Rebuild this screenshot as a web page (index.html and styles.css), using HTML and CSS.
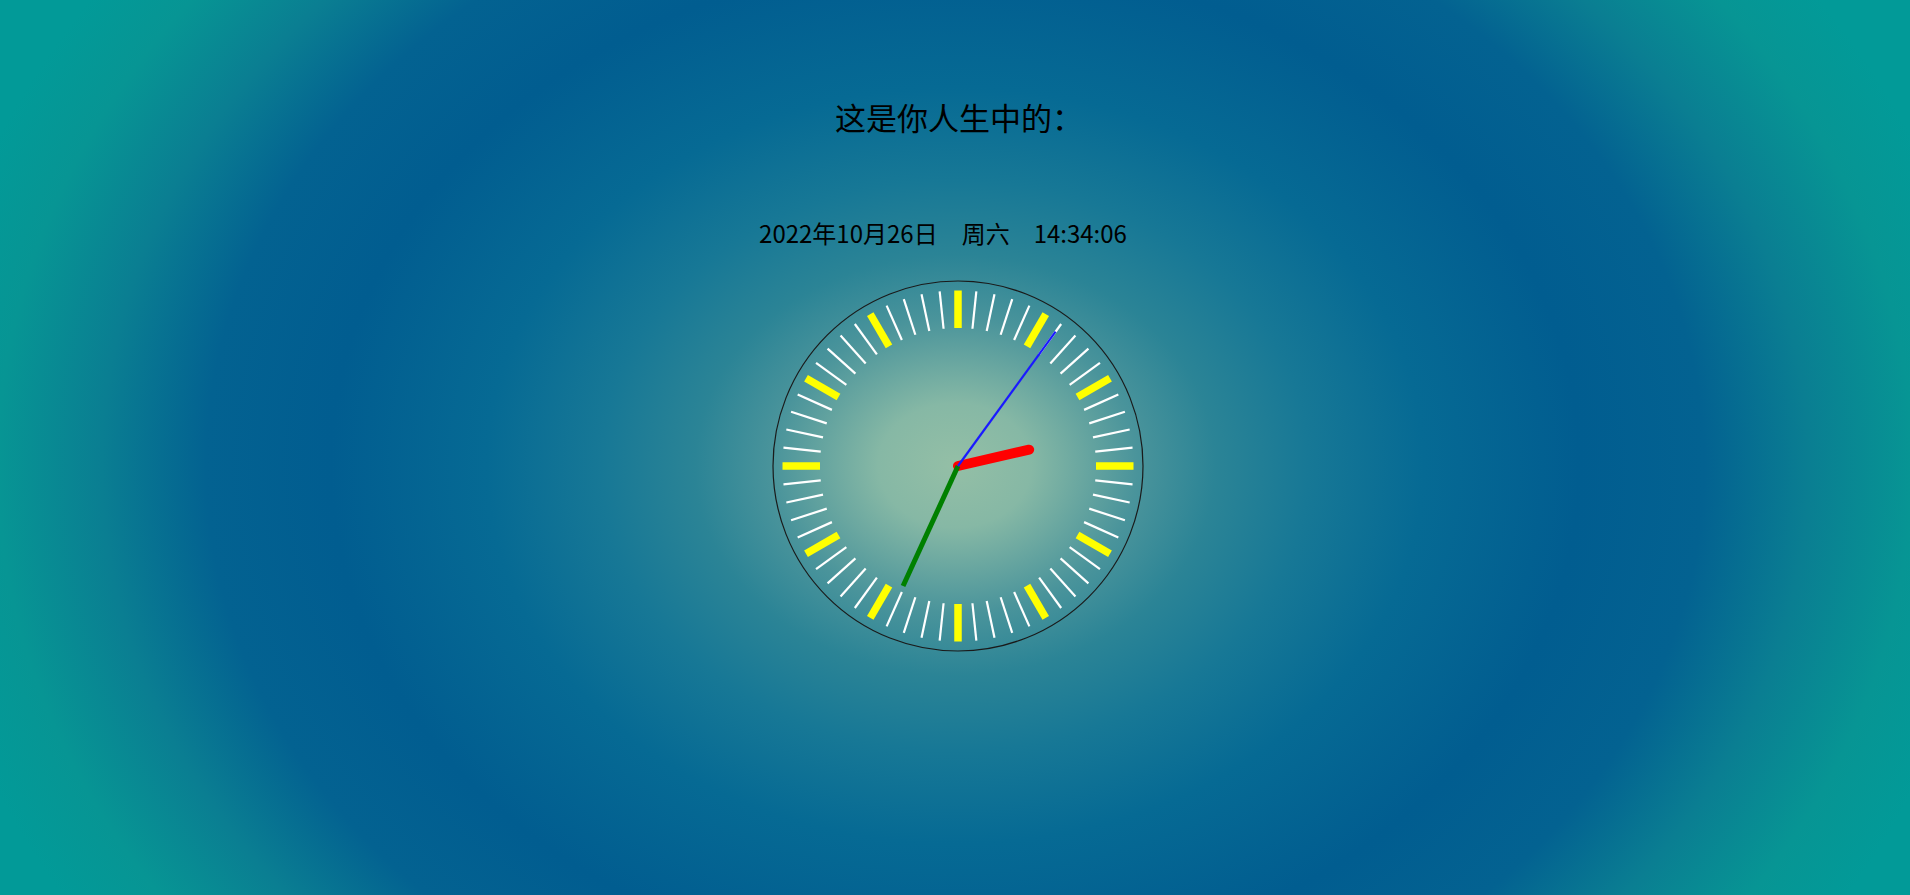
FILE: index.html
```html
<!DOCTYPE html>
<html lang="zh-CN">
<head>
<meta charset="utf-8">
<title>时钟</title>
<link rel="stylesheet" href="styles.css">
</head>
<body>
<main class="page">
  <h1 class="title">这是你人生中的：</h1>
  <p class="date">2022年10月26日　周六　14:34:06　</p>
  <div class="clock-wrap">
    <svg class="clock" width="400" height="400" viewBox="0 0 400 400">
      <defs>
        <line id="tick" x1="200" y1="24.5" x2="200" y2="62" stroke="#ffffff" stroke-width="2.2"/>
        <line id="hourtick" x1="200" y1="24.5" x2="200" y2="62" stroke="#ffff00" stroke-width="7.5"/>
      </defs>
      <circle cx="200" cy="200" r="185" fill="none" stroke="#1a1a1a" stroke-width="1.2"/>
      <g>
        <use href="#hourtick"/>
        <use href="#tick" transform="rotate(6 200 200)"/>
        <use href="#tick" transform="rotate(12 200 200)"/>
        <use href="#tick" transform="rotate(18 200 200)"/>
        <use href="#tick" transform="rotate(24 200 200)"/>
        <use href="#hourtick" transform="rotate(30 200 200)"/>
        <use href="#tick" transform="rotate(36 200 200)"/>
        <use href="#tick" transform="rotate(42 200 200)"/>
        <use href="#tick" transform="rotate(48 200 200)"/>
        <use href="#tick" transform="rotate(54 200 200)"/>
        <use href="#hourtick" transform="rotate(60 200 200)"/>
        <use href="#tick" transform="rotate(66 200 200)"/>
        <use href="#tick" transform="rotate(72 200 200)"/>
        <use href="#tick" transform="rotate(78 200 200)"/>
        <use href="#tick" transform="rotate(84 200 200)"/>
        <use href="#hourtick" transform="rotate(90 200 200)"/>
        <use href="#tick" transform="rotate(96 200 200)"/>
        <use href="#tick" transform="rotate(102 200 200)"/>
        <use href="#tick" transform="rotate(108 200 200)"/>
        <use href="#tick" transform="rotate(114 200 200)"/>
        <use href="#hourtick" transform="rotate(120 200 200)"/>
        <use href="#tick" transform="rotate(126 200 200)"/>
        <use href="#tick" transform="rotate(132 200 200)"/>
        <use href="#tick" transform="rotate(138 200 200)"/>
        <use href="#tick" transform="rotate(144 200 200)"/>
        <use href="#hourtick" transform="rotate(150 200 200)"/>
        <use href="#tick" transform="rotate(156 200 200)"/>
        <use href="#tick" transform="rotate(162 200 200)"/>
        <use href="#tick" transform="rotate(168 200 200)"/>
        <use href="#tick" transform="rotate(174 200 200)"/>
        <use href="#hourtick" transform="rotate(180 200 200)"/>
        <use href="#tick" transform="rotate(186 200 200)"/>
        <use href="#tick" transform="rotate(192 200 200)"/>
        <use href="#tick" transform="rotate(198 200 200)"/>
        <use href="#tick" transform="rotate(204 200 200)"/>
        <use href="#hourtick" transform="rotate(210 200 200)"/>
        <use href="#tick" transform="rotate(216 200 200)"/>
        <use href="#tick" transform="rotate(222 200 200)"/>
        <use href="#tick" transform="rotate(228 200 200)"/>
        <use href="#tick" transform="rotate(234 200 200)"/>
        <use href="#hourtick" transform="rotate(240 200 200)"/>
        <use href="#tick" transform="rotate(246 200 200)"/>
        <use href="#tick" transform="rotate(252 200 200)"/>
        <use href="#tick" transform="rotate(258 200 200)"/>
        <use href="#tick" transform="rotate(264 200 200)"/>
        <use href="#hourtick" transform="rotate(270 200 200)"/>
        <use href="#tick" transform="rotate(276 200 200)"/>
        <use href="#tick" transform="rotate(282 200 200)"/>
        <use href="#tick" transform="rotate(288 200 200)"/>
        <use href="#tick" transform="rotate(294 200 200)"/>
        <use href="#hourtick" transform="rotate(300 200 200)"/>
        <use href="#tick" transform="rotate(306 200 200)"/>
        <use href="#tick" transform="rotate(312 200 200)"/>
        <use href="#tick" transform="rotate(318 200 200)"/>
        <use href="#tick" transform="rotate(324 200 200)"/>
        <use href="#hourtick" transform="rotate(330 200 200)"/>
        <use href="#tick" transform="rotate(336 200 200)"/>
        <use href="#tick" transform="rotate(342 200 200)"/>
        <use href="#tick" transform="rotate(348 200 200)"/>
        <use href="#tick" transform="rotate(354 200 200)"/>
      </g>
      <line x1="200" y1="200" x2="200" y2="127" stroke="#ff0000" stroke-width="10" stroke-linecap="round" transform="rotate(77.05 200 200)"/>
      <line x1="200" y1="200" x2="200" y2="68" stroke="#008000" stroke-width="5" transform="rotate(204.6 200 200)"/>
      <line x1="200" y1="200" x2="200" y2="34" stroke="#1a1aff" stroke-width="2.2" transform="rotate(36 200 200)"/>
    </svg>
  </div>
</main>
</body>
</html>
```

FILE: styles.css
```css
html, body {
  margin: 0;
  padding: 0;
}

body {
  min-height: 100vh;
  font-family: "Noto Sans CJK SC", "Noto Sans", sans-serif;
  color: #000;
  background-color: #005d90;
  background-image: radial-gradient(ellipse 1040px 840px at 50% 52%,
    #94bfa6 0%,
    #86b8a5 7.4%,
    #4a949b 17.5%,
    #2b8496 25%,
    #177896 34%,
    #066a94 45%,
    #015d90 60%,
    #036291 72%,
    #0a7e92 82%,
    #079594 92%,
    #029a98 100%);
}

.page {
  display: flex;
  flex-direction: column;
  align-items: center;
  padding-top: 101px;
}

.title {
  margin: 0;
  padding-left: 8px;
  font-size: 31px;
  font-weight: normal;
  line-height: 32px;
}

.date {
  margin: 88px 0 0;
  font-size: 24px;
  line-height: 24px;
}

.clock-wrap {
  margin-top: 21px;
  padding-left: 6px;
}

.clock {
  display: block;
}
```
